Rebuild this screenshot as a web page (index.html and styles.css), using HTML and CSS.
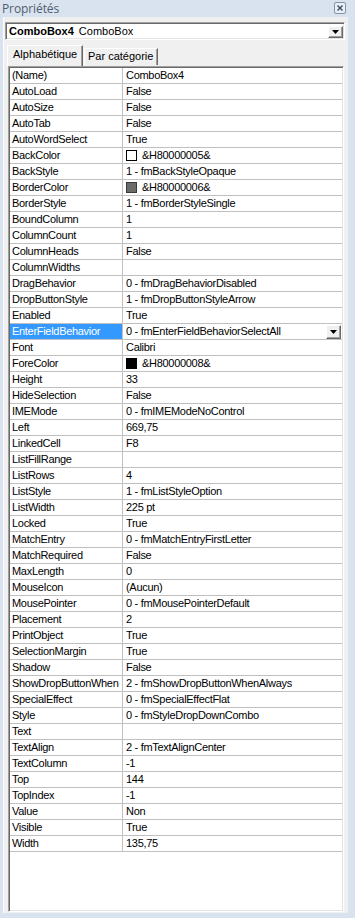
FILE: index.html
```html
<!DOCTYPE html>
<html lang="fr">
<head>
<meta charset="utf-8">
<title>Propriétés</title>
<link rel="stylesheet" href="styles.css">
</head>
<body>
<div class="window">
  <div class="titlebar">
    <span class="title">Propriétés</span>
    <span class="close">
      <svg width="12" height="12" viewBox="0 0 12 12"><rect x="0.5" y="0.5" width="11" height="11" rx="1.5" fill="#e9eef5" stroke="#8494aa"/><path d="M3.5 3.5 L8.5 8.5 M8.5 3.5 L3.5 8.5" stroke="#3b4a5e" stroke-width="1.4"/></svg>
    </span>
  </div>
  <div class="panel">
    <div class="combo">
      <span class="combo-text"><b>ComboBox4</b> ComboBox</span>
      <span class="ddbtn"><svg width="7" height="4" viewBox="0 0 7 4"><path d="M0 0 H7 L3.5 4 Z" fill="#000"/></svg></span>
    </div>
    <div class="tabs">
      <span class="tab active">Alphabétique</span>
      <span class="tab">Par catégorie</span>
    </div>
    <div class="grid">
      <div class="row"><span class="k">(Name)</span><span class="v">ComboBox4</span></div>
      <div class="row"><span class="k">AutoLoad</span><span class="v">False</span></div>
      <div class="row"><span class="k">AutoSize</span><span class="v">False</span></div>
      <div class="row"><span class="k">AutoTab</span><span class="v">False</span></div>
      <div class="row"><span class="k">AutoWordSelect</span><span class="v">True</span></div>
      <div class="row"><span class="k">BackColor</span><span class="v"><i class="sw sw-white"></i>&amp;H80000005&amp;</span></div>
      <div class="row"><span class="k">BackStyle</span><span class="v">1 - fmBackStyleOpaque</span></div>
      <div class="row"><span class="k">BorderColor</span><span class="v"><i class="sw sw-gray"></i>&amp;H80000006&amp;</span></div>
      <div class="row"><span class="k">BorderStyle</span><span class="v">1 - fmBorderStyleSingle</span></div>
      <div class="row"><span class="k">BoundColumn</span><span class="v">1</span></div>
      <div class="row"><span class="k">ColumnCount</span><span class="v">1</span></div>
      <div class="row"><span class="k">ColumnHeads</span><span class="v">False</span></div>
      <div class="row"><span class="k">ColumnWidths</span><span class="v"></span></div>
      <div class="row"><span class="k">DragBehavior</span><span class="v">0 - fmDragBehaviorDisabled</span></div>
      <div class="row"><span class="k">DropButtonStyle</span><span class="v">1 - fmDropButtonStyleArrow</span></div>
      <div class="row"><span class="k">Enabled</span><span class="v">True</span></div>
      <div class="row selected"><span class="k">EnterFieldBehavior</span><span class="v">0 - fmEnterFieldBehaviorSelectAll<span class="cellbtn"><svg width="7" height="4" viewBox="0 0 7 4"><path d="M0 0 H7 L3.5 4 Z" fill="#000"/></svg></span></span></div>
      <div class="row"><span class="k">Font</span><span class="v">Calibri</span></div>
      <div class="row"><span class="k">ForeColor</span><span class="v"><i class="sw sw-black"></i>&amp;H80000008&amp;</span></div>
      <div class="row"><span class="k">Height</span><span class="v">33</span></div>
      <div class="row"><span class="k">HideSelection</span><span class="v">False</span></div>
      <div class="row"><span class="k">IMEMode</span><span class="v">0 - fmIMEModeNoControl</span></div>
      <div class="row"><span class="k">Left</span><span class="v">669,75</span></div>
      <div class="row"><span class="k">LinkedCell</span><span class="v">F8</span></div>
      <div class="row"><span class="k">ListFillRange</span><span class="v"></span></div>
      <div class="row"><span class="k">ListRows</span><span class="v">4</span></div>
      <div class="row"><span class="k">ListStyle</span><span class="v">1 - fmListStyleOption</span></div>
      <div class="row"><span class="k">ListWidth</span><span class="v">225 pt</span></div>
      <div class="row"><span class="k">Locked</span><span class="v">True</span></div>
      <div class="row"><span class="k">MatchEntry</span><span class="v">0 - fmMatchEntryFirstLetter</span></div>
      <div class="row"><span class="k">MatchRequired</span><span class="v">False</span></div>
      <div class="row"><span class="k">MaxLength</span><span class="v">0</span></div>
      <div class="row"><span class="k">MouseIcon</span><span class="v">(Aucun)</span></div>
      <div class="row"><span class="k">MousePointer</span><span class="v">0 - fmMousePointerDefault</span></div>
      <div class="row"><span class="k">Placement</span><span class="v">2</span></div>
      <div class="row"><span class="k">PrintObject</span><span class="v">True</span></div>
      <div class="row"><span class="k">SelectionMargin</span><span class="v">True</span></div>
      <div class="row"><span class="k">Shadow</span><span class="v">False</span></div>
      <div class="row"><span class="k">ShowDropButtonWhen</span><span class="v">2 - fmShowDropButtonWhenAlways</span></div>
      <div class="row"><span class="k">SpecialEffect</span><span class="v">0 - fmSpecialEffectFlat</span></div>
      <div class="row"><span class="k">Style</span><span class="v">0 - fmStyleDropDownCombo</span></div>
      <div class="row"><span class="k">Text</span><span class="v"></span></div>
      <div class="row"><span class="k">TextAlign</span><span class="v">2 - fmTextAlignCenter</span></div>
      <div class="row"><span class="k">TextColumn</span><span class="v">-1</span></div>
      <div class="row"><span class="k">Top</span><span class="v">144</span></div>
      <div class="row"><span class="k">TopIndex</span><span class="v">-1</span></div>
      <div class="row"><span class="k">Value</span><span class="v">Non</span></div>
      <div class="row"><span class="k">Visible</span><span class="v">True</span></div>
      <div class="row"><span class="k">Width</span><span class="v">135,75</span></div>
    </div>
  </div>
</div>
</body>
</html>
```

FILE: styles.css
```css
html, body {
  margin: 0;
  padding: 0;
}
body {
  background: #d9e3ef;
  font-family: "Liberation Sans", Arial, sans-serif;
  font-size: 11px;
  color: #000;
}
.window {
  width: 355px;
  height: 918px;
  display: flex;
  flex-direction: column;
  background: #d9e3ef;
}
.titlebar {
  height: 17px;
  flex: none;
  display: flex;
  justify-content: space-between;
  align-items: flex-start;
  padding: 0 9px 0 2px;
}
.title {
  font-family: "Open Sans", "Liberation Sans", sans-serif;
  font-size: 12px;
  line-height: 17px;
  color: #4e5d70;
  letter-spacing: -0.1px;
}
.close {
  margin-top: 2px;
  width: 12px;
  height: 12px;
  display: block;
}
.close svg { display: block; }
.panel {
  height: 896px;
  margin-left: 3px;
  width: 345px;
  background: #f0f0f0;
  border-left: 1px solid #fbfcfd;
  box-sizing: border-box;
  display: flex;
  flex-direction: column;
  padding: 5px 4px 1px 4px;
}
.combo {
  height: 18px;
  flex: none;
  box-sizing: border-box;
  width: 340px;
  margin-left: -3px;
  background: #fff;
  border-top: 1px solid #a0a0a0;
  border-left: 1px solid #a0a0a0;
  border-right: 1px solid #fff;
  border-bottom: 1px solid #fff;
  box-shadow: inset 1px 1px 0 #696969, inset -1px -1px 0 #e3e3e3;
  display: flex;
  align-items: center;
  justify-content: space-between;
  padding: 0 1px 0 3px;
}
.combo-text {
  font-size: 11px;
  line-height: 16px;
  white-space: nowrap;
}
.combo-text b { font-weight: bold; margin-right: 2px; }
.ddbtn, .cellbtn {
  width: 15px;
  height: 12px;
  box-sizing: border-box;
  background: #f0f0f0;
  border-top: 1px solid #fff;
  border-left: 1px solid #fff;
  border-right: 1px solid #696969;
  border-bottom: 1px solid #696969;
  box-shadow: inset -1px -1px 0 #a0a0a0;
  display: flex;
  align-items: center;
  justify-content: center;
  margin-top: 2px;
}
.ddbtn svg, .cellbtn svg { display: block; }
.tabs {
  flex: none;
  height: 26px;
  display: flex;
  align-items: flex-end;
  margin-left: -1px;
}
.tab {
  box-sizing: border-box;
  height: 17px;
  line-height: 15px;
  font-size: 11px;
  background: #f0f0f0;
  border-top: 1px solid #fff;
  border-left: 1px solid #fff;
  border-right: 1px solid #696969;
  box-shadow: inset -1px 0 0 #a0a0a0;
  white-space: nowrap;
}
.tab.active {
  height: 21px;
  width: 76px;
  padding: 1px 0 0 5px;
}
.tab:not(.active) {
  width: 74px;
  margin-left: 1px;
  margin-bottom: 1px;
  padding-left: 3px;
}
.grid {
  flex: 1;
  background: #fff;
  box-sizing: border-box;
  border-top: 1px solid #a0a0a0;
  border-left: 1px solid #a0a0a0;
  border-right: 1px solid #fff;
  border-bottom: 1px solid #fff;
  box-shadow: inset 1px 1px 0 #696969, inset -1px -1px 0 #e3e3e3;
  padding: 1px;
  width: 336px;
}
.row {
  display: grid;
  grid-template-columns: 113px 1fr;
  height: 16px;
  letter-spacing: -0.3px;
}
.row .k, .row .v {
  box-sizing: border-box;
  border-bottom: 1px solid #c0c0c0;
  height: 16px;
  line-height: 15px;
  white-space: nowrap;
  overflow: hidden;
}
.row .k {
  border-right: 1px solid #c0c0c0;
  padding-left: 2px;
}
.row .v {
  padding-left: 3px;
  display: flex;
  align-items: center;
}
.row.selected .k {
  background: #3399ff;
  color: #fff;
}
.row.selected .v {
  justify-content: space-between;
  padding-right: 1px;
}
.cellbtn {
  height: 14px;
  margin-top: 0;
}
.sw {
  display: inline-block;
  width: 11px;
  height: 11px;
  box-sizing: border-box;
  border: 1px solid #000;
  margin-right: 5px;
}
.sw-white { background: #fff; }
.sw-gray { background: #6b6b6b; border-color: #3a3a3a; }
.sw-black { background: #000; }
```
